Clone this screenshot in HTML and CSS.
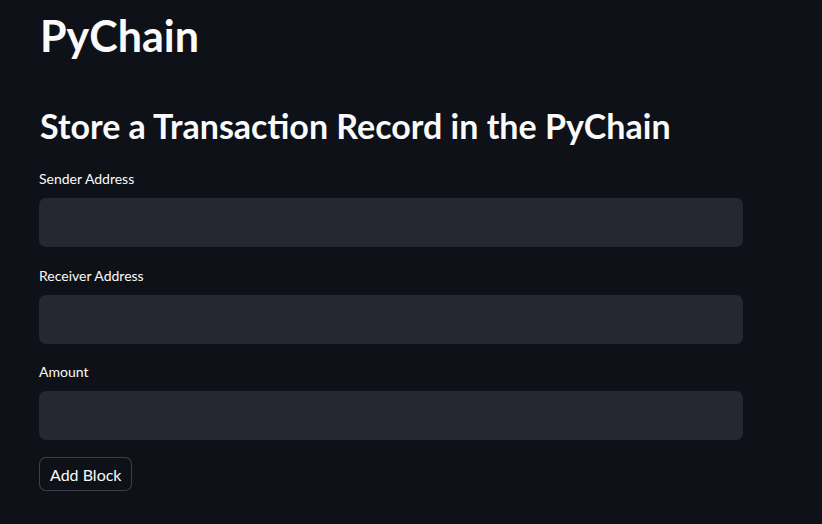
FILE: index.html
```html
<!DOCTYPE html>
<html>
<head>
<meta charset="utf-8">
<link rel="stylesheet" href="styles.css">
</head>
<body>
<main class="main">
  <h1 class="title">PyChain</h1>
  <h2 class="subtitle">Store a Transaction Record in the PyChain</h2>
  <div class="field">
    <label class="label">Sender Address</label>
    <div class="input"></div>
  </div>
  <div class="field">
    <label class="label">Receiver Address</label>
    <div class="input"></div>
  </div>
  <div class="field">
    <label class="label">Amount</label>
    <div class="input"></div>
  </div>
  <button class="btn">Add Block</button>
</main>
</body>
</html>
```

FILE: styles.css
```css
html, body {
  margin: 0;
  padding: 0;
  background: #0e1117;
  color: #fafafa;
  font-family: Lato, "Noto Sans", sans-serif;
}
.main {
  display: flex;
  flex-direction: column;
  align-items: flex-start;
  padding: 0 79px 0 39px;
  width: 704px;
}
.title {
  margin: 10px 0 0 1px;
  font-size: 43px;
  font-weight: 700;
  line-height: 52px;
}
.subtitle {
  margin: 42px 0 0 1px;
  font-size: 34px;
  font-weight: 700;
  line-height: 44px;
}
.field {
  display: flex;
  flex-direction: column;
  width: 100%;
  margin-top: 21px;
}
.field + .field {
  margin-top: 18.5px;
}
.label {
  font-size: 14px;
  line-height: 20px;
  margin-bottom: 9px;
}
.input {
  height: 49px;
  background: #262730;
  border-radius: 7px;
  width: 100%;
}
.btn {
  margin-top: 17px;
  height: 34px;
  padding: 0 10px;
  background: #0e1117;
  color: #fafafa;
  border: 1px solid rgba(250, 250, 250, 0.2);
  border-radius: 7px;
  font-family: Lato, "Noto Sans", sans-serif;
  font-size: 16px;
}
```
